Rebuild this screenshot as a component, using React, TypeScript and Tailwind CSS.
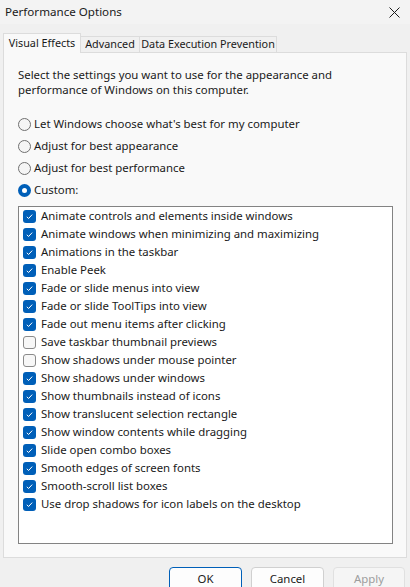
import React from "react";

const items: [string, boolean][] = [
  ["Animate controls and elements inside windows", true],
  ["Animate windows when minimizing and maximizing", true],
  ["Animations in the taskbar", true],
  ["Enable Peek", true],
  ["Fade or slide menus into view", true],
  ["Fade or slide ToolTips into view", true],
  ["Fade out menu items after clicking", true],
  ["Save taskbar thumbnail previews", false],
  ["Show shadows under mouse pointer", false],
  ["Show shadows under windows", true],
  ["Show thumbnails instead of icons", true],
  ["Show translucent selection rectangle", true],
  ["Show window contents while dragging", true],
  ["Slide open combo boxes", true],
  ["Smooth edges of screen fonts", true],
  ["Smooth-scroll list boxes", true],
  ["Use drop shadows for icon labels on the desktop", true],
];

function Check({ on }: { on: boolean }) {
  if (on)
    return (
      <div className="w-[13px] h-[13px] rounded-[3px] bg-[#005fb8] flex items-center justify-center shrink-0">
        <svg width="9" height="9" viewBox="0 0 9 9">
          <path d="M1.8 4.8 L3.6 6.5 L7.2 2.6" fill="none" stroke="#ffffff" strokeWidth="1" />
        </svg>
      </div>
    );
  return <div className="w-[13px] h-[13px] rounded-[3px] border border-[#8a8a8a] bg-[#f7f7f7] shrink-0" />;
}

function Radio({ on, label }: { on?: boolean; label: string }) {
  return (
    <div className="flex items-center h-[22px]">
      {on ? (
        <div className="w-[13px] h-[13px] rounded-full bg-[#005fb8] flex items-center justify-center shrink-0">
          <div className="w-[5px] h-[5px] rounded-full bg-white" />
        </div>
      ) : (
        <div className="w-[13px] h-[13px] rounded-full border border-[#707070] bg-[#f5f5f5] shrink-0" />
      )}
      <span className="ml-[3px] whitespace-nowrap">{label}</span>
    </div>
  );
}

export default function App() {
  return (
    <div
      className="w-[410px] h-[587px] bg-[#f0f0f0] text-[11.4px] text-[#1a1a1a] overflow-hidden flex flex-col"
      style={{ fontFamily: '"Noto Sans", "Open Sans", sans-serif' }}
    >
      <div className="h-[24px] bg-[#f3f3f3] flex items-center justify-between pl-[5px] pr-[10px] shrink-0">
        <span className="text-[11.6px] text-[#1a1a1a] leading-none">Performance Options</span>
        <svg width="11" height="11" viewBox="0 0 11 11">
          <path d="M0.5 0.5 L10.5 10.5 M10.5 0.5 L0.5 10.5" stroke="#1a1a1a" strokeWidth="1" />
        </svg>
      </div>
      <div className="h-[9px] shrink-0" />
      <div className="flex items-end pl-[3px] h-[20px] shrink-0 relative z-10 text-[10.8px]">
        <div className="h-[20px] w-[78px] bg-[#f9f9f9] border border-b-0 border-[#dcdcdc] flex items-center justify-center whitespace-nowrap">
          Visual Effects
        </div>
        <div className="h-[17px] w-[59px] bg-[#f0f0f0] border border-l-0 border-[#dcdcdc] flex items-center justify-center whitespace-nowrap">
          Advanced
        </div>
        <div className="h-[17px] w-[137px] bg-[#f0f0f0] border border-l-0 border-[#dcdcdc] flex items-center justify-center whitespace-nowrap">
          Data Execution Prevention
        </div>
      </div>
      <div className="mx-[3px] -mt-px h-[506px] bg-[#f9f9f9] border border-[#dcdcdc] pt-[14px] pl-[14px] pr-[13px] flex flex-col shrink-0">
        <p className="leading-[15px]">
          Select the settings you want to use for the appearance and
          <br />
          performance of Windows on this computer.
        </p>
        <div className="mt-[16px] flex flex-col">
          <Radio label="Let Windows choose what's best for my computer" />
          <Radio label="Adjust for best appearance" />
          <Radio label="Adjust for best performance" />
          <Radio on label="Custom:" />
        </div>
        <div className="mt-[5px] h-[338px] bg-white border border-[#838383] pl-[4px]">
          {items.map(([t, on]) => (
            <div key={t} className="flex items-center h-[18px]">
              <Check on={on} />
              <span className="ml-[5px] whitespace-nowrap">{t}</span>
            </div>
          ))}
        </div>
      </div>
      <div className="flex justify-end gap-[9px] pr-[5px] mt-[9px]">
        <div className="w-[73px] h-[24px] rounded-[4px] bg-[#fdfdfd] border border-[#005fb8] flex items-center justify-center">
          OK
        </div>
        <div className="w-[73px] h-[24px] rounded-[4px] bg-[#fdfdfd] border border-[#d0d0d0] flex items-center justify-center">
          Cancel
        </div>
        <div className="w-[72px] h-[24px] rounded-[4px] bg-[#f5f5f5] border border-[#e0e0e0] text-[#9d9d9d] flex items-center justify-center">
          Apply
        </div>
      </div>
    </div>
  );
}
